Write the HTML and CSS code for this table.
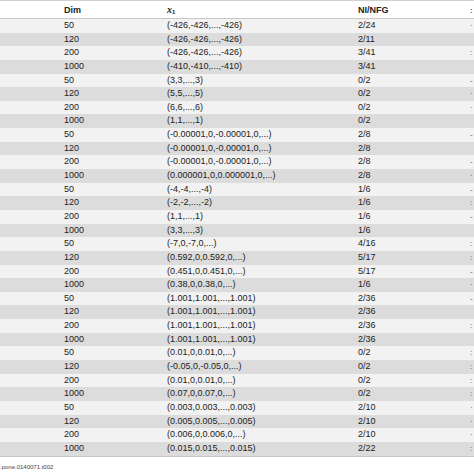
FILE: index.html
```html
<!DOCTYPE html>
<html>
<head>
<meta charset="utf-8">
<link rel="stylesheet" href="styles.css">
</head>
<body>
<div class="frame">
  <div class="table">
    <div class="row head">
      <span></span><span>Dim</span><span><i class="xv">x</i><sub>1</sub></span><span>NI/NFG</span><span>:</span>
    </div>
    <div class="body">
      <div class="row"><span></span><span>50</span><span>(-426,-426,...,-426)</span><span>2/24</span><span>·</span></div>
      <div class="row"><span></span><span>120</span><span>(-426,-426,...,-426)</span><span>2/11</span><span></span></div>
      <div class="row"><span></span><span>200</span><span>(-426,-426,...,-426)</span><span>3/41</span><span>:</span></div>
      <div class="row"><span></span><span>1000</span><span>(-410,-410,...,-410)</span><span>3/41</span><span></span></div>
      <div class="row"><span></span><span>50</span><span>(3,3,...,3)</span><span>0/2</span><span>-</span></div>
      <div class="row"><span></span><span>120</span><span>(5,5,...,5)</span><span>0/2</span><span>·</span></div>
      <div class="row"><span></span><span>200</span><span>(6,6,...,6)</span><span>0/2</span><span>·</span></div>
      <div class="row"><span></span><span>1000</span><span>(1,1,...,1)</span><span>0/2</span><span></span></div>
      <div class="row"><span></span><span>50</span><span>(-0.00001,0,-0.00001,0,...)</span><span>2/8</span><span>-</span></div>
      <div class="row"><span></span><span>120</span><span>(-0.00001,0,-0.00001,0,...)</span><span>2/8</span><span></span></div>
      <div class="row"><span></span><span>200</span><span>(-0.00001,0,-0.00001,0,...)</span><span>2/8</span><span>-</span></div>
      <div class="row"><span></span><span>1000</span><span>(0.000001,0,0.000001,0,...)</span><span>2/8</span><span>·</span></div>
      <div class="row"><span></span><span>50</span><span>(-4,-4,...,-4)</span><span>1/6</span><span>-</span></div>
      <div class="row"><span></span><span>120</span><span>(-2,-2,...,-2)</span><span>1/6</span><span>:</span></div>
      <div class="row"><span></span><span>200</span><span>(1,1,...,1)</span><span>1/6</span><span>-</span></div>
      <div class="row"><span></span><span>1000</span><span>(3,3,...,3)</span><span>1/6</span><span></span></div>
      <div class="row"><span></span><span>50</span><span>(-7,0,-7,0,...)</span><span>4/16</span><span>:</span></div>
      <div class="row"><span></span><span>120</span><span>(0.592,0,0.592,0,...)</span><span>5/17</span><span>:</span></div>
      <div class="row"><span></span><span>200</span><span>(0.451,0,0.451,0,...)</span><span>5/17</span><span>-</span></div>
      <div class="row"><span></span><span>1000</span><span>(0.38,0,0.38,0,...)</span><span>1/6</span><span>·</span></div>
      <div class="row"><span></span><span>50</span><span>(1.001,1.001,...,1.001)</span><span>2/36</span><span>-</span></div>
      <div class="row"><span></span><span>120</span><span>(1.001,1.001,...,1.001)</span><span>2/36</span><span></span></div>
      <div class="row"><span></span><span>200</span><span>(1.001,1.001,...,1.001)</span><span>2/36</span><span>:</span></div>
      <div class="row"><span></span><span>1000</span><span>(1.001,1.001,...,1.001)</span><span>2/36</span><span></span></div>
      <div class="row"><span></span><span>50</span><span>(0.01,0,0.01,0,...)</span><span>0/2</span><span>:</span></div>
      <div class="row"><span></span><span>120</span><span>(-0.05,0,-0.05,0,...)</span><span>0/2</span><span>:</span></div>
      <div class="row"><span></span><span>200</span><span>(0.01,0,0.01,0,...)</span><span>0/2</span><span>:</span></div>
      <div class="row"><span></span><span>1000</span><span>(0.07,0,0.07,0,...)</span><span>0/2</span><span>:</span></div>
      <div class="row"><span></span><span>50</span><span>(0.003,0.003,...,0.003)</span><span>2/10</span><span>·</span></div>
      <div class="row"><span></span><span>120</span><span>(0.005,0.005,...,0.005)</span><span>2/10</span><span>·</span></div>
      <div class="row"><span></span><span>200</span><span>(0.006,0,0.006,0,...)</span><span>2/10</span><span>·</span></div>
      <div class="row"><span></span><span>1000</span><span>(0.015,0.015,...,0.015)</span><span>2/22</span><span>:</span></div>
    </div>
  </div>
  <div class="caption">.pone.0140071.t002</div>
</div>
</body>
</html>
```

FILE: styles.css
```css
html, body {
  margin: 0;
  padding: 0;
  background: #ffffff;
}

.frame {
  width: 474px;
  height: 474px;
  overflow: hidden;
  font-family: "Liberation Sans", Arial, sans-serif;
  color: #222222;
  font-size: 9px;
}

.table {
  width: 474px;
  border-top: 1px solid #d0d0d0;
  border-bottom: 1px solid #c4c4c4;
}

.row {
  display: grid;
  grid-template-columns: 64px 103px 191px 112px 4px;
  align-items: center;
  height: 13.65px;
  line-height: 13.65px;
  white-space: nowrap;
}

.row span:last-child {
  font-size: 8px;
  color: #555555;
}

.row.head {
  height: 17px;
  line-height: 17px;
  font-weight: bold;
  background: #ffffff;
  border-bottom: 1px solid #c8c8c8;
}

.head .xv {
  font-style: italic;
  font-family: "Liberation Serif", "Times New Roman", serif;
  font-size: 10px;
}

.head sub {
  font-size: 6px;
  vertical-align: -1px;
  line-height: 0;
}

.body .row:nth-child(odd) {
  background: #f2f2f2;
}

.body .row:nth-child(even) {
  background: #dcdcdc;
}

.caption {
  padding-top: 5px;
  font-size: 6px;
  line-height: 10px;
  color: #444444;
}
```
